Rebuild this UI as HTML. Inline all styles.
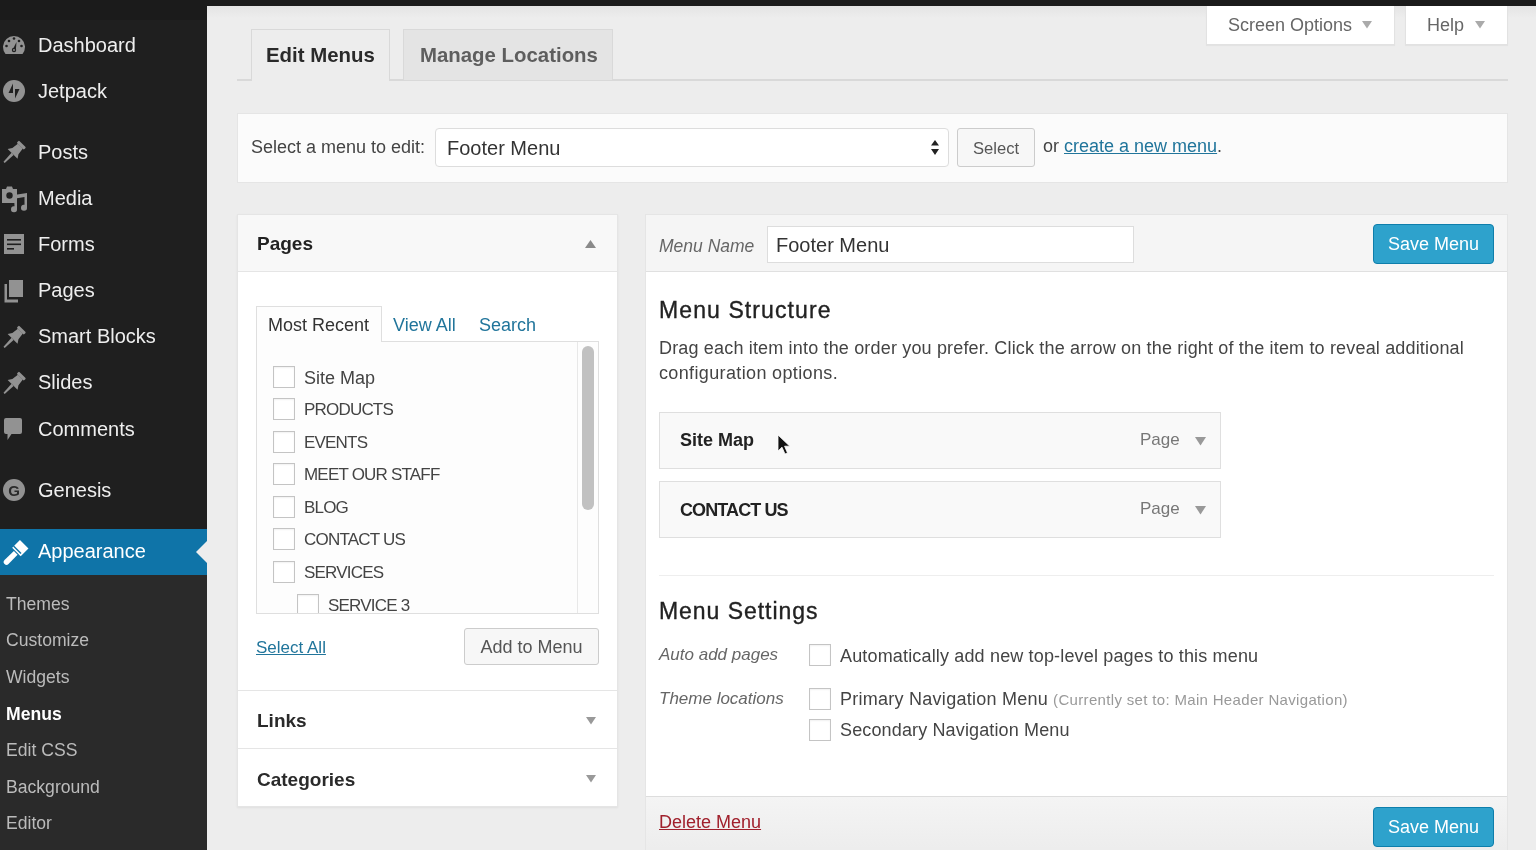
<!DOCTYPE html>
<html><head><meta charset="utf-8">
<style>
*{box-sizing:border-box;margin:0;padding:0}
body{will-change:transform}
html,body{width:1536px;height:850px;overflow:hidden;background:#ededed;font-family:"Liberation Sans",sans-serif;color:#444}
.a{position:absolute;white-space:nowrap}
#topbar{left:0;top:0;width:1536px;height:6px;background:#1b1b1b}
#side{left:0;top:6px;width:207px;height:844px;background:linear-gradient(#1b1b1b 0,#1b1b1b 14px,#1f1f1f 14px)}
#sub{left:0;top:575px;width:207px;height:275px;background:#2a2a2a}
#cur{left:0;top:529px;width:207px;height:46px;background:#0f74a8}
.mi{left:38px;font-size:20px;color:#eee;line-height:24px}
.si{left:6px;font-size:17.6px;color:#bbb;line-height:22px}
.ico{left:3px;width:24px;height:24px}
.panel{background:#fff;border:1px solid #e3e3e3}
.btn{background:#f7f7f7;border:1px solid #ccc;border-radius:3px;color:#555;font-size:18px;text-align:center}
.pbtn{background:#2ea2cc;border:1px solid #0e7eab;border-radius:4px;color:#fff;font-size:18px;text-align:center}
.cb{width:22px;height:22px;border:1px solid #c4c4c4;background:#fff;box-shadow:inset 0 1px 2px rgba(0,0,0,.06)}
.lnk{color:#21759b}
</style></head><body>
<div class="a" style="left:207px;top:6px;width:1329px;height:12px;background:linear-gradient(#e4e4e4,#ededed)"></div>
<div class="a" id="topbar"></div>
<div class="a" id="side"></div>
<div class="a" id="sub"></div>
<div class="a" id="cur"></div>

<!-- sidebar items -->
<div class="a mi" style="top:33px">Dashboard</div>
<div class="a mi" style="top:79px">Jetpack</div>
<div class="a mi" style="top:140px">Posts</div>
<div class="a mi" style="top:186px">Media</div>
<div class="a mi" style="top:232px">Forms</div>
<div class="a mi" style="top:278px">Pages</div>
<div class="a mi" style="top:324px">Smart Blocks</div>
<div class="a mi" style="top:370px">Slides</div>
<div class="a mi" style="top:417px">Comments</div>
<div class="a mi" style="top:478px">Genesis</div>
<div class="a mi" style="top:539px;color:#fff">Appearance</div>
<div class="a si" style="top:592.5px">Themes</div>
<div class="a si" style="top:628.5px">Customize</div>
<div class="a si" style="top:665.5px">Widgets</div>
<div class="a si" style="top:702.5px;color:#fff;font-weight:bold">Menus</div>
<div class="a si" style="top:738.5px">Edit CSS</div>
<div class="a si" style="top:775.5px">Background</div>
<div class="a si" style="top:811.5px">Editor</div>
<!-- current arrow -->
<div class="a" style="left:196px;top:541px;width:0;height:0;border-top:11px solid transparent;border-bottom:11px solid transparent;border-right:11px solid #ededed"></div>

<!-- screen options / help -->
<div class="a" style="left:1206px;top:6px;width:189px;height:39px;background:#fff;border:1px solid #e2e2e2;border-top:0;box-shadow:0 1px 1px rgba(0,0,0,.04)"></div>
<div class="a" style="left:1228px;top:15px;font-size:18px;color:#666">Screen Options</div>
<svg class="a" style="left:1362px;top:21px" width="10" height="8"><path d="M0,0 L10,0 L5,7.5 Z" fill="#aaa"/></svg>
<div class="a" style="left:1405px;top:6px;width:103px;height:39px;background:#fff;border:1px solid #e2e2e2;border-top:0;box-shadow:0 1px 1px rgba(0,0,0,.04)"></div>
<div class="a" style="left:1427px;top:15px;font-size:18px;color:#666">Help</div>
<svg class="a" style="left:1475px;top:21px" width="10" height="8"><path d="M0,0 L10,0 L5,7.5 Z" fill="#aaa"/></svg>

<!-- nav tabs -->
<div class="a" style="left:237px;top:79px;width:1271px;height:2px;background:#d9d9d9"></div>
<div class="a" style="left:251px;top:29px;width:139px;height:52px;background:#ededed;border:1px solid #d9d9d9;border-bottom:0;font-size:20.4px;font-weight:bold;color:#2a2a2a;padding:14px 0 0 14px">Edit Menus</div>
<div class="a" style="left:403px;top:29px;width:210px;height:51px;background:#e4e4e4;border:1px solid #d9d9d9;border-bottom:0;font-size:20.4px;font-weight:bold;color:#5e5e5e;padding:14px 0 0 16px">Manage Locations</div>

<!-- select menu box -->
<div class="a" style="left:237px;top:113px;width:1271px;height:70px;background:#fbfbfb;border:1px solid #e5e5e5"></div>
<div class="a" style="left:251px;top:137px;font-size:18px;color:#444">Select a menu to edit:</div>
<div class="a" style="left:435px;top:128px;width:514px;height:39px;background:#fff;border:1px solid #ddd;border-radius:4px;font-size:20px;color:#333;padding:8px 0 0 11px">Footer Menu</div>
<div class="a" style="left:957px;top:128px;width:78px;height:39px;background:#f7f7f7;border:1px solid #ccc;border-radius:3px;font-size:16.6px;color:#555;padding:10px 0 0 15px">Select</div>
<div class="a" style="left:1043px;top:135.5px;font-size:18px;color:#444">or <span class="lnk" style="text-decoration:underline">create a new menu</span>.</div>

<!-- left column -->
<div class="a" style="left:237px;top:214px;width:381px;height:593px;background:#fff;border:1px solid #e5e5e5;box-shadow:0 1px 2px rgba(0,0,0,.06)"></div>
<div class="a" style="left:238px;top:215px;width:379px;height:57px;background:#f8f8f8;border-bottom:1px solid #e5e5e5"></div>
<div class="a" style="left:257px;top:233px;font-size:19px;font-weight:bold;color:#222">Pages</div>
<!-- pages tabs + list -->
<div class="a" style="left:256px;top:341px;width:343px;height:273px;background:#fdfdfd;border:1px solid #dfdfdf"></div>
<div class="a" style="left:256px;top:306px;width:126px;height:36px;background:#fdfdfd;border:1px solid #dfdfdf;border-bottom:0;font-size:18px;color:#333;padding:8px 0 0 11px">Most Recent</div>
<div class="a lnk" style="left:393px;top:314.5px;font-size:18px">View All</div>
<div class="a lnk" style="left:479px;top:314.5px;font-size:18px">Search</div>
<div class="a" style="left:577px;top:342px;width:1px;height:271px;background:#e8e8e8"></div>
<div class="a" style="left:582px;top:346px;width:12px;height:164px;background:#c1c1c1;border-radius:6px"></div>
<div class="a cb" style="left:273px;top:366px"></div><div class="a" style="left:304px;top:367.5px;font-size:18px;color:#444">Site Map</div>
<div class="a cb" style="left:273px;top:398px"></div><div class="a" style="left:304px;top:399.5px;font-size:17px;letter-spacing:-0.8px;color:#444">PRODUCTS</div>
<div class="a cb" style="left:273px;top:431px"></div><div class="a" style="left:304px;top:432.5px;font-size:17px;letter-spacing:-0.8px;color:#444">EVENTS</div>
<div class="a cb" style="left:273px;top:463px"></div><div class="a" style="left:304px;top:464.5px;font-size:17px;letter-spacing:-0.8px;color:#444">MEET OUR STAFF</div>
<div class="a cb" style="left:273px;top:496px"></div><div class="a" style="left:304px;top:497.5px;font-size:17px;letter-spacing:-0.8px;color:#444">BLOG</div>
<div class="a cb" style="left:273px;top:528px"></div><div class="a" style="left:304px;top:529.5px;font-size:17px;letter-spacing:-0.8px;color:#444">CONTACT US</div>
<div class="a cb" style="left:273px;top:561px"></div><div class="a" style="left:304px;top:562.5px;font-size:17px;letter-spacing:-0.8px;color:#444">SERVICES</div>
<div class="a" style="left:257px;top:590px;width:320px;height:23px;overflow:hidden">
<div class="a cb" style="left:40px;top:4px"></div><div class="a" style="left:71px;top:5.5px;font-size:17px;letter-spacing:-0.8px;color:#444">SERVICE 3</div>
</div>
<div class="a lnk" style="left:256px;top:638px;font-size:17px;text-decoration:underline">Select All</div>
<div class="a btn" style="left:464px;top:628px;width:135px;height:37px;padding-top:8px">Add to Menu</div>
<div class="a" style="left:238px;top:690px;width:379px;height:1px;background:#e5e5e5"></div>
<div class="a" style="left:238px;top:748px;width:379px;height:1px;background:#e5e5e5"></div>
<div class="a" style="left:257px;top:710px;font-size:19px;font-weight:bold;color:#2a2a2a">Links</div>
<div class="a" style="left:257px;top:769px;font-size:19px;font-weight:bold;color:#2a2a2a">Categories</div>

<!-- right column -->
<div class="a" style="left:645px;top:214px;width:863px;height:640px;background:#fff;border:1px solid #e5e5e5"></div>
<div class="a" style="left:646px;top:215px;width:861px;height:57px;background:#f5f5f5;border-bottom:1px solid #e0e0e0"></div>
<div class="a" style="left:659px;top:236px;font-size:17.5px;font-style:italic;color:#666">Menu Name</div>
<div class="a" style="left:767px;top:226px;width:367px;height:37px;background:#fff;border:1px solid #ddd;font-size:20px;color:#333;padding:7px 0 0 8px">Footer Menu</div>
<div class="a pbtn" style="left:1373px;top:224px;width:121px;height:40px;padding-top:9px">Save Menu</div>

<div class="a" style="left:659px;top:297px;font-size:23px;letter-spacing:1.1px;-webkit-text-stroke:0.35px #222;color:#222">Menu Structure</div>
<div class="a" style="left:659px;top:335.5px;font-size:18px;color:#444;line-height:25.6px"><span style="letter-spacing:0.17px">Drag each item into the order you prefer. Click the arrow on the right of the item to reveal additional</span><br><span style="letter-spacing:0.36px">configuration options.</span></div>

<div class="a" style="left:659px;top:412px;width:562px;height:57px;background:#f9f9f9;border:1px solid #dfdfdf"></div>
<div class="a" style="left:680px;top:430px;font-size:18px;font-weight:bold;color:#222">Site Map</div>
<div class="a" style="left:1140px;top:430px;font-size:17px;color:#777">Page</div>
<div class="a" style="left:659px;top:481px;width:562px;height:57px;background:#f9f9f9;border:1px solid #dfdfdf"></div>
<div class="a" style="left:680px;top:500px;font-size:18px;letter-spacing:-0.9px;font-weight:bold;color:#222">CONTACT US</div>
<div class="a" style="left:1140px;top:499px;font-size:17px;color:#777">Page</div>

<div class="a" style="left:659px;top:575px;width:835px;height:1px;background:#eee"></div>
<div class="a" style="left:659px;top:598px;font-size:23px;letter-spacing:0.95px;-webkit-text-stroke:0.35px #222;color:#222">Menu Settings</div>
<div class="a" style="left:659px;top:645px;font-size:17px;font-style:italic;color:#666">Auto add pages</div>
<div class="a" style="left:659px;top:689px;font-size:17px;font-style:italic;color:#666">Theme locations</div>
<div class="a cb" style="left:809px;top:644px"></div>
<div class="a" style="left:840px;top:646px;letter-spacing:0.16px;font-size:18px;color:#444">Automatically add new top-level pages to this menu</div>
<div class="a cb" style="left:809px;top:688px"></div>
<div class="a" style="left:840px;top:689px;font-size:18px;color:#444"><span style="letter-spacing:0.26px">Primary Navigation Menu</span> <span style="font-size:15px;letter-spacing:0.33px;color:#999">(Currently set to: Main Header Navigation)</span></div>
<div class="a cb" style="left:809px;top:719px"></div>
<div class="a" style="left:840px;top:720px;letter-spacing:0.14px;font-size:18px;color:#444">Secondary Navigation Menu</div>

<div class="a" style="left:646px;top:796px;width:861px;height:60px;background:linear-gradient(#f4f4f4,#ececec);border-top:1px solid #ddd"></div>
<div class="a" style="left:659px;top:812px;font-size:18px;color:#a0202c;text-decoration:underline">Delete Menu</div>
<div class="a pbtn" style="left:1373px;top:807px;width:121px;height:40px;padding-top:9px">Save Menu</div>


<!-- sidebar icons -->
<svg class="a" style="left:0;top:0" width="40" height="580" viewBox="0 0 40 580">
<g fill="#929292">
 <!-- dashboard gauge -->
 <path d="M5.5,54 A11,11 0 1 1 22.5,54 Z"/>
 
</g>
<g fill="#1f1f1f">
 <circle cx="9" cy="41" r="1.3"/><circle cx="14" cy="38.5" r="1.3"/><circle cx="19" cy="41" r="1.3"/>
 <circle cx="6.5" cy="46" r="1.3"/><circle cx="21.5" cy="46" r="1.3"/>
 <path d="M12.5,50 L16.5,42 L15.8,50.5 Z"/><circle cx="14" cy="50" r="2.2"/>
</g>
<circle cx="14" cy="50" r="0.9" fill="#929292"/>
<!-- jetpack -->
<circle cx="14" cy="91" r="11" fill="#929292"/>
<path d="M13,83.5 L13,93 L8.5,93 Z" fill="#1f1f1f"/>
<path d="M15,98.5 L15,89 L19.5,89 Z" fill="#1f1f1f"/>
<!-- pins -->
<g id="pin" fill="#929292">
 <g transform="translate(14,152.5) rotate(45)">
  <rect x="-5" y="-12" width="10" height="3.2" rx="1"/>
  <path d="M-3.5,-9 L3.5,-9 L4.3,-2 L7,2 L-7,2 L-4.3,-2 Z"/>
  <path d="M-1.5,2 L1.5,2 L0.8,14 L-0.8,14 Z"/>
 </g>
</g>
<g fill="#929292">
 <g transform="translate(14,337.5) rotate(45)">
  <rect x="-5" y="-12" width="10" height="3.2" rx="1"/>
  <path d="M-3.5,-9 L3.5,-9 L4.3,-2 L7,2 L-7,2 L-4.3,-2 Z"/>
  <path d="M-1.5,2 L1.5,2 L0.8,14 L-0.8,14 Z"/>
 </g>
 <g transform="translate(14,383.5) rotate(45)">
  <rect x="-5" y="-12" width="10" height="3.2" rx="1"/>
  <path d="M-3.5,-9 L3.5,-9 L4.3,-2 L7,2 L-7,2 L-4.3,-2 Z"/>
  <path d="M-1.5,2 L1.5,2 L0.8,14 L-0.8,14 Z"/>
 </g>
</g>
<!-- media -->
<g fill="#929292">
 <path d="M2,189 L6,189 L7,186.5 L12,186.5 L13,189 L17,189 L17,203 L2,203 Z"/>
 <path d="M14,195 L27,193 L27,207.5 A3,3 0 1 1 24.5,204.8 L24.5,197 L17,198.3 L17,209 A3,3 0 1 1 14.5,206.3 Z"/>
</g>
<circle cx="9.5" cy="195.5" r="3.2" fill="#1f1f1f"/>
<path d="M13,194 L17,194 L17,203 L13,203 Z" fill="#1f1f1f" opacity="0"/>
<!-- forms -->
<rect x="4" y="234" width="20" height="20" fill="#929292"/>
<rect x="7" y="239" width="14" height="1.6" fill="#1f1f1f"/>
<rect x="7" y="243.5" width="14" height="1.6" fill="#1f1f1f"/>
<rect x="7" y="248" width="7" height="1.6" fill="#1f1f1f"/>
<!-- pages -->
<rect x="9" y="280" width="14" height="17" fill="#929292"/>
<path d="M4.5,284 L7,284 L7,299.5 L18,299.5 L18,302.5 L4.5,302.5 Z" fill="#929292"/>
<!-- comments -->
<path d="M6,418 L20,418 Q22,418 22,420 L22,432 Q22,434 20,434 L11.5,434 L7.5,440 L7.5,434 L6,434 Q4,434 4,432 L4,420 Q4,418 6,418 Z" fill="#929292"/>
<!-- genesis -->
<circle cx="14" cy="490" r="11" fill="#929292"/>
<text x="14" y="495.5" text-anchor="middle" font-family="Liberation Sans" font-weight="bold" font-size="15" fill="#2a2a2a">G</text>
<!-- appearance brush -->
<g fill="#ffffff" transform="translate(15,553.5) rotate(45)">
 <path d="M-6,-13 L6,-13 L6,-2 L-6,-2 Z"/>
 <path d="M-2.6,-1 L2.6,-1 L2.8,12 A2.8,2.8 0 0 1 -2.8,12 Z"/>
</g>
<path d="M13.5,546 L21,553.5" stroke="#0f74a8" stroke-width="1.4"/>
</svg>
<!-- cursor -->
<svg class="a" style="left:776px;top:433px" width="18" height="24" viewBox="0 0 18 24">
<path d="M2,2 L2,18 L6,14.2 L9,21 L11.5,20 L8.6,13.2 L13.8,13.2 Z" fill="#111" stroke="#fff" stroke-width="0.8"/>
</svg>
<!-- select arrows -->
<svg class="a" style="left:929px;top:139px" width="12" height="18" viewBox="0 0 12 18">
<path d="M2,6.5 L6,1 L10,6.5 Z M2,10 L10,10 L6,16 Z" fill="#222"/>
</svg>
<!-- page item arrows -->
<svg class="a" style="left:1195px;top:437px" width="11" height="9"><path d="M0,0 L11,0 L5.5,8.5 Z" fill="#999"/></svg>
<svg class="a" style="left:1195px;top:506px" width="11" height="9"><path d="M0,0 L11,0 L5.5,8.5 Z" fill="#999"/></svg>
<!-- pages toggle arrows -->
<svg class="a" style="left:585px;top:240px" width="11" height="8"><path d="M0,8 L11,8 L5.5,0 Z" fill="#8a8a8a"/></svg>
<svg class="a" style="left:586px;top:717px" width="10" height="8"><path d="M0,0 L10,0 L5,7.5 Z" fill="#999"/></svg>
<svg class="a" style="left:586px;top:775px" width="10" height="8"><path d="M0,0 L10,0 L5,7.5 Z" fill="#999"/></svg>
</body></html>
